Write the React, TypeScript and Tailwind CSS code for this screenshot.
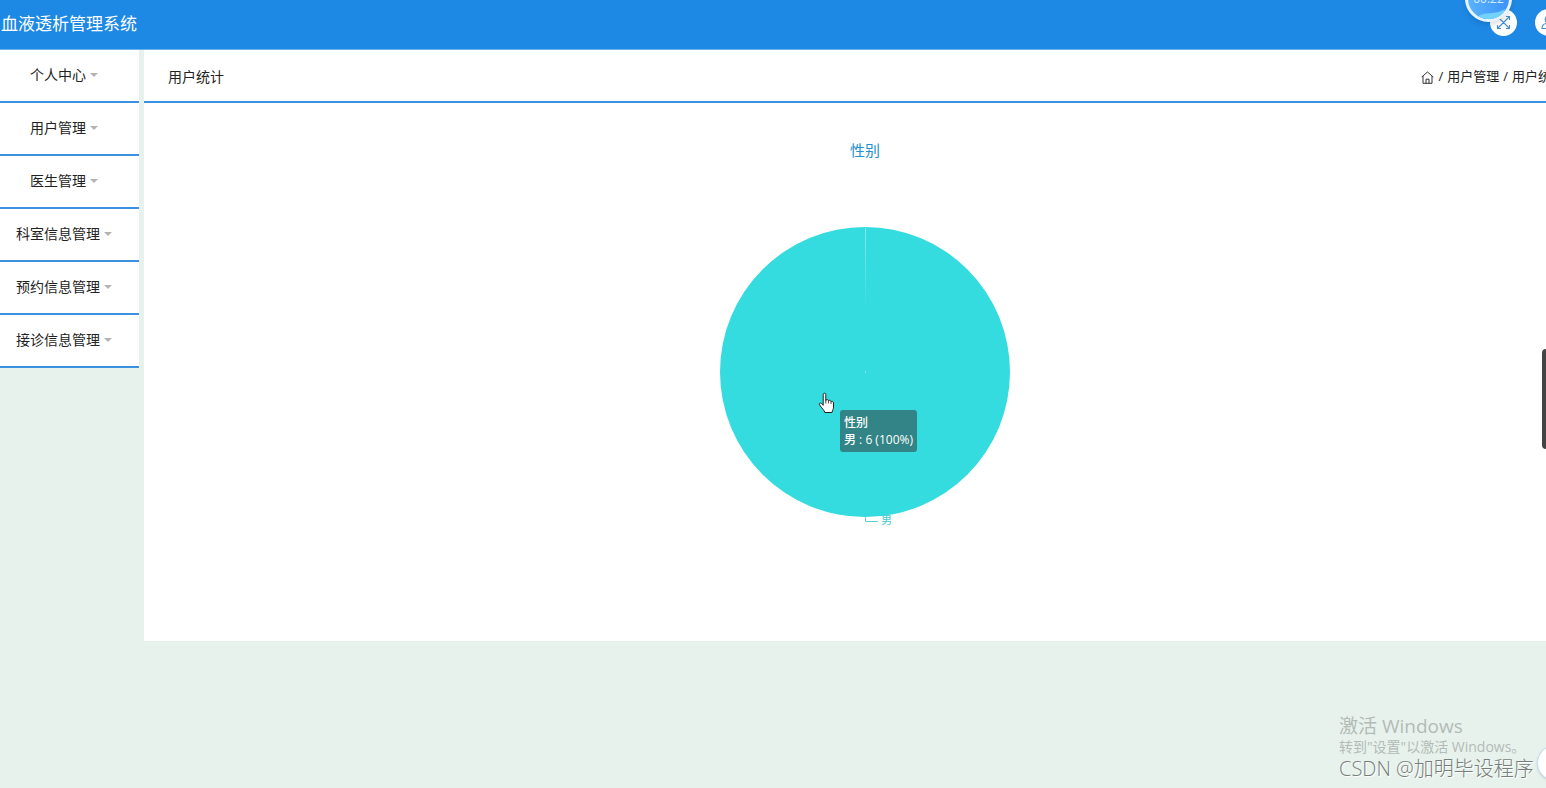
const menus = ['个人中心', '用户管理', '医生管理', '科室信息管理', '预约信息管理', '接诊信息管理'];

function Header() {
  return (
    <header className="relative h-[50px] shrink-0 border-b border-[#6bb2f0] bg-[#1e88e5] flex items-center pl-px pb-px">
      <h1 className="text-[17px] leading-6 text-white">血液透析管理系统</h1>
      <button
        aria-label="全屏"
        className="absolute left-[calc(100%-56px)] top-[9px] w-[27px] h-[27px] rounded-full bg-white flex items-center justify-center"
      >
        <svg width="15" height="15" viewBox="0 0 15 15" fill="none" stroke="#3f8fd6" strokeWidth="1.1">
          <path d="M1.5 5V1.5H5M10 1.5h3.5V5M13.5 10v3.5H10M5 13.5H1.5V10M1.5 1.5l12 12M13.5 1.5l-12 12" />
        </svg>
      </button>
      <button
        aria-label="用户"
        className="absolute left-[calc(100%-11px)] top-[9px] w-[27px] h-[27px] rounded-full bg-white flex items-center justify-center"
      >
        <svg width="15" height="15" viewBox="0 0 15 15" fill="none" stroke="#3f8fd6" strokeWidth="1.1">
          <circle cx="7.5" cy="4.5" r="3.3" />
          <path d="M1 13.5c0-3.5 2.5-5.3 6.5-5.3s6.5 1.8 6.5 5.3z" />
        </svg>
      </button>
      <div className="absolute left-[calc(100%-81px)] -top-[25px] w-[47px] h-[47px] rounded-full border-[3px] border-[#e8f2fc] bg-linear-to-r from-[#59b4ff] to-[#3c92f5] shadow-md overflow-hidden">
        <svg className="absolute inset-0" width="41" height="41" viewBox="0 0 41 41">
          <path d="M8 40C17 32 26 38 37 31L34 41H8z" fill="#72d2fb" />
        </svg>
        <span className="absolute inset-x-0 top-[13px] text-center text-xs leading-4 text-[#d5eaff]">00:22</span>
      </div>
    </header>
  );
}

function Sidebar() {
  return (
    <nav className="w-[139px] shrink-0">
      <ul>
        {menus.map((name) => (
          <li key={name}>
            <button className="w-full h-[53px] pr-[11px] pb-px flex items-center justify-center gap-1 bg-white border-b-2 border-[#3d90df] text-sm text-[#222]">
              {name}
              <svg width="8" height="4" viewBox="0 0 8 4" fill="#b3b3b3">
                <path d="M0 0h8L4 4z" />
              </svg>
            </button>
          </li>
        ))}
      </ul>
    </nav>
  );
}

function Breadcrumb() {
  return (
    <div className="h-[53px] flex items-center justify-between pl-6 pr-[22px] pt-[3px] border-b-2 border-[#3d90df] text-[#222]">
      <h2 className="text-sm">用户统计</h2>
      <div className="flex items-center gap-1 text-[13px] whitespace-nowrap">
        <a href="#home" aria-label="首页">
          <svg width="13" height="13" viewBox="0 0 13 13" fill="none" stroke="#333" strokeWidth="1">
            <path d="M.7 6L6.5 1l5.8 5M2 5v7.3h9V5M5 12.3V8.2h3v4.1" />
          </svg>
        </a>
        <span>/</span>
        <a href="#users">用户管理</a>
        <span>/</span>
        <span>用户统计</span>
      </div>
    </div>
  );
}

function GenderChart() {
  return (
    <section className="flex flex-col items-center pt-9 h-[538px]">
      <h3 className="text-[15px] leading-[22px] text-[#2190cb]">性别</h3>
      <div className="relative mt-[66px]">
        <svg width="290" height="302" viewBox="0 0 290 302" className="block">
          <defs>
            <linearGradient id="seam" x1="0" y1="0" x2="0" y2="1">
              <stop offset="0" stopColor="#80e9eb" />
              <stop offset="1" stopColor="#34dbdf" />
            </linearGradient>
          </defs>
          <path d="M145.500 288v6.500H158" fill="none" stroke="#5ccfd3" />
          <circle cx="145" cy="145" r="145" fill="#34dbdf" />
          <rect x="145" y="1" width="1" height="84" fill="url(#seam)" />
          <rect x="145" y="144" width="1" height="2" fill="#7deaec" />
        </svg>
        <span className="absolute left-[161px] top-[285px] text-[11px] leading-4 text-[#45c9ce]">男</span>
        <svg className="absolute left-[98px] top-[165px]" width="18" height="22" viewBox="0 0 18 22">
          <path
            d="M5.200 2.500C5.200.800 7.800.800 7.800 2.500V8.500C8 7 10.400 7.200 10.400 8.900 10.800 7.700 13 8.100 13 9.800 13.600 8.900 15.500 9.300 15.500 11V15C15.500 17 14.500 18 14 20.500H6.800C6.500 18.500 4 16.500 1.500 12.800 .600 11.400 2.500 10.300 3.700 11.700L5.200 13.300z"
            fill="#fff"
            stroke="#222"
            strokeLinejoin="round"
          />
          <path d="M7.800 8v3.500M10.400 9v2.500M13 10v2" stroke="#222" strokeWidth=".8" />
        </svg>
        <div className="absolute left-[120px] top-[183px] rounded-[3px] bg-[#338486] px-1 py-1 text-xs leading-[17px] font-medium text-white whitespace-nowrap">
          <p>性别</p>
          <p>男 : 6 (100%)</p>
        </div>
      </div>
    </section>
  );
}

function Watermark() {
  return (
    <div className="absolute left-[calc(100%-207px)] bottom-[6px] whitespace-nowrap text-[#b3bbb8]">
      <p className="text-[19px] leading-6">激活 Windows</p>
      <p className="text-sm leading-[18px]">转到"设置"以激活 Windows。</p>
      <p className="text-[20px] leading-[26px] font-light text-[#777d7a] [text-shadow:1px_1px_0_#fff]">CSDN @加明毕设程序</p>
    </div>
  );
}

export default function App() {
  return (
    <div className="relative min-h-screen overflow-hidden flex flex-col bg-[#e8f2ec] font-['Open_Sans','Noto_Sans_CJK_SC',sans-serif]">
      <Header />
      <div className="flex items-start gap-[5px]">
        <Sidebar />
        {/* the content is wider than the window and runs off its right edge */}
        <main className="grow -mr-10 bg-white">
          <Breadcrumb />
          <GenderChart />
        </main>
      </div>
      <div className="absolute right-0 top-[349px] w-1 h-[100px] rounded-l-sm bg-[#444]" />
      <div className="absolute left-[calc(100%-9px)] bottom-[7px] w-9 h-9 rounded-full bg-white border border-[#bfdcf0] shadow" />
      <Watermark />
    </div>
  );
}
